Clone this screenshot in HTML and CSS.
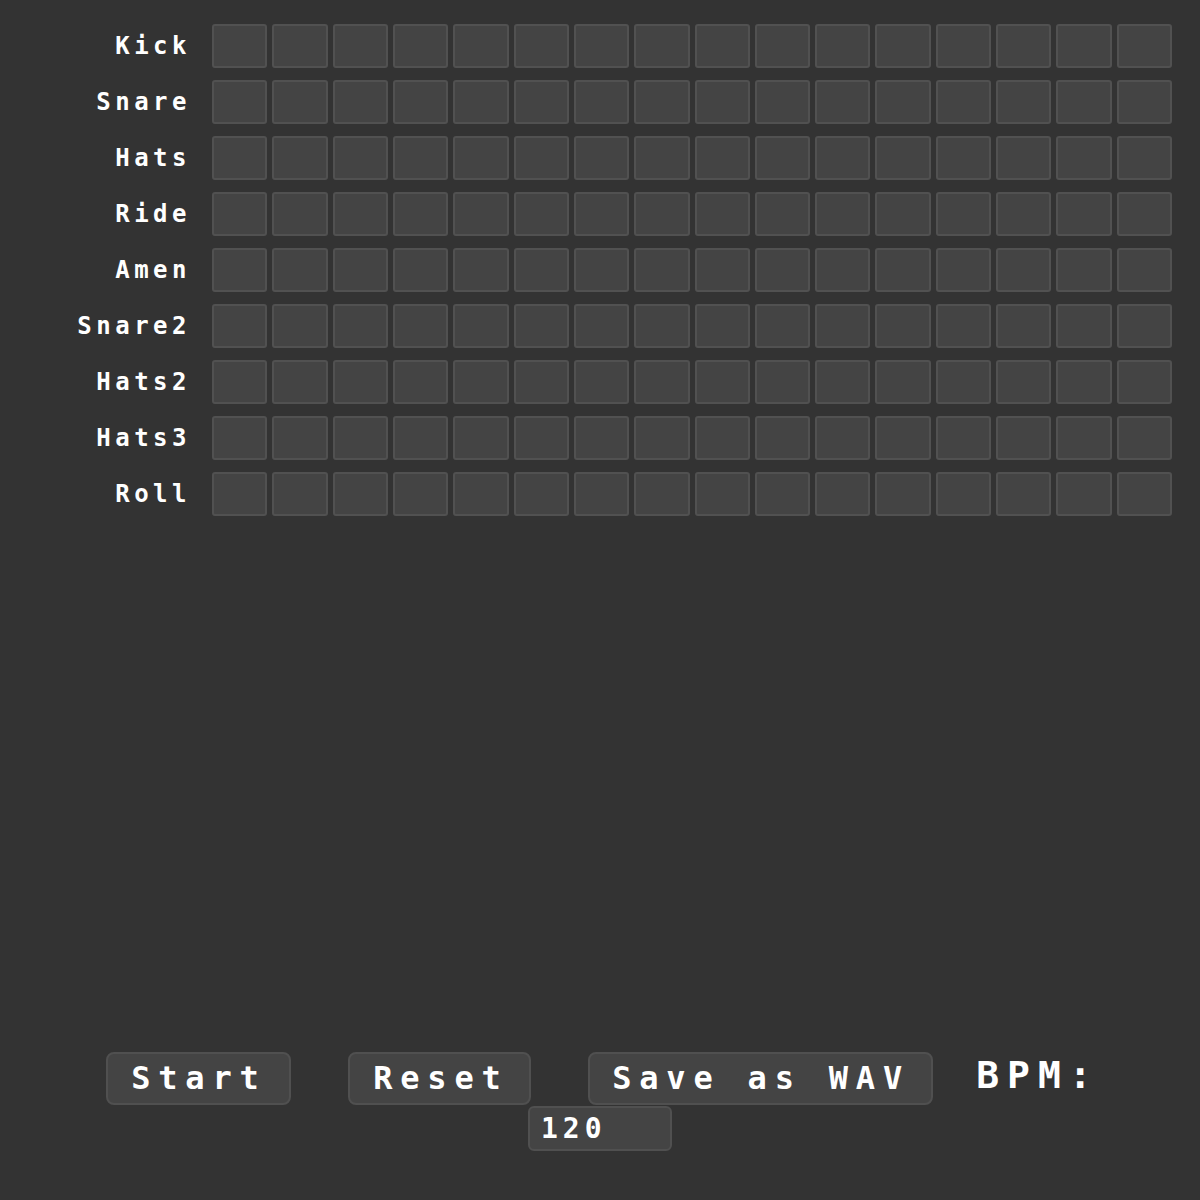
FILE: index.html
```html
<!DOCTYPE html>
<html>
<head>
<meta charset="utf-8">
<title>Drum Sequencer</title>
<link rel="stylesheet" href="styles.css">
</head>
<body>
<div class="tracks">
  <div class="track"><div class="name">Kick</div><div class="steps"><div class="step"></div><div class="step"></div><div class="step"></div><div class="step"></div><div class="step"></div><div class="step"></div><div class="step"></div><div class="step"></div><div class="step"></div><div class="step"></div><div class="step"></div><div class="step"></div><div class="step"></div><div class="step"></div><div class="step"></div><div class="step"></div></div></div>
  <div class="track"><div class="name">Snare</div><div class="steps"><div class="step"></div><div class="step"></div><div class="step"></div><div class="step"></div><div class="step"></div><div class="step"></div><div class="step"></div><div class="step"></div><div class="step"></div><div class="step"></div><div class="step"></div><div class="step"></div><div class="step"></div><div class="step"></div><div class="step"></div><div class="step"></div></div></div>
  <div class="track"><div class="name">Hats</div><div class="steps"><div class="step"></div><div class="step"></div><div class="step"></div><div class="step"></div><div class="step"></div><div class="step"></div><div class="step"></div><div class="step"></div><div class="step"></div><div class="step"></div><div class="step"></div><div class="step"></div><div class="step"></div><div class="step"></div><div class="step"></div><div class="step"></div></div></div>
  <div class="track"><div class="name">Ride</div><div class="steps"><div class="step"></div><div class="step"></div><div class="step"></div><div class="step"></div><div class="step"></div><div class="step"></div><div class="step"></div><div class="step"></div><div class="step"></div><div class="step"></div><div class="step"></div><div class="step"></div><div class="step"></div><div class="step"></div><div class="step"></div><div class="step"></div></div></div>
  <div class="track"><div class="name">Amen</div><div class="steps"><div class="step"></div><div class="step"></div><div class="step"></div><div class="step"></div><div class="step"></div><div class="step"></div><div class="step"></div><div class="step"></div><div class="step"></div><div class="step"></div><div class="step"></div><div class="step"></div><div class="step"></div><div class="step"></div><div class="step"></div><div class="step"></div></div></div>
  <div class="track"><div class="name">Snare2</div><div class="steps"><div class="step"></div><div class="step"></div><div class="step"></div><div class="step"></div><div class="step"></div><div class="step"></div><div class="step"></div><div class="step"></div><div class="step"></div><div class="step"></div><div class="step"></div><div class="step"></div><div class="step"></div><div class="step"></div><div class="step"></div><div class="step"></div></div></div>
  <div class="track"><div class="name">Hats2</div><div class="steps"><div class="step"></div><div class="step"></div><div class="step"></div><div class="step"></div><div class="step"></div><div class="step"></div><div class="step"></div><div class="step"></div><div class="step"></div><div class="step"></div><div class="step"></div><div class="step"></div><div class="step"></div><div class="step"></div><div class="step"></div><div class="step"></div></div></div>
  <div class="track"><div class="name">Hats3</div><div class="steps"><div class="step"></div><div class="step"></div><div class="step"></div><div class="step"></div><div class="step"></div><div class="step"></div><div class="step"></div><div class="step"></div><div class="step"></div><div class="step"></div><div class="step"></div><div class="step"></div><div class="step"></div><div class="step"></div><div class="step"></div><div class="step"></div></div></div>
  <div class="track"><div class="name">Roll</div><div class="steps"><div class="step"></div><div class="step"></div><div class="step"></div><div class="step"></div><div class="step"></div><div class="step"></div><div class="step"></div><div class="step"></div><div class="step"></div><div class="step"></div><div class="step"></div><div class="step"></div><div class="step"></div><div class="step"></div><div class="step"></div><div class="step"></div></div></div>
</div>
<div class="controls">
  <button class="btn btn-start">Start</button>
  <button class="btn btn-reset">Reset</button>
  <button class="btn btn-save">Save as WAV</button>
  <label class="bpm-label" for="bpm">BPM:</label>
  <input class="bpm-input" id="bpm" type="text" value="120">
</div>
</body>
</html>
```

FILE: styles.css
```css
html, body {
  margin: 0;
  padding: 0;
  background: #333333;
  color: #ffffff;
  font-family: "DejaVu Sans Mono", "Liberation Mono", monospace;
  font-weight: bold;
}

.tracks {
  display: flex;
  flex-direction: column;
  gap: 12px;
  padding-top: 24px;
}

.track {
  display: flex;
  align-items: center;
  height: 44px;
}

.name {
  width: 191px;
  text-align: right;
  font-size: 24px;
  letter-spacing: 4.5px;
  line-height: 44px;
  margin-right: 21px;
}

.steps {
  display: grid;
  grid-template-columns: repeat(16, 1fr);
  gap: 5px;
  width: 960px;
  height: 44px;
}

.step {
  box-sizing: border-box;
  height: 44px;
  background: #444444;
  border: 2px solid #515151;
  border-radius: 3px;
}

.controls {
  display: flex;
  flex-wrap: wrap;
  justify-content: center;
  align-items: flex-start;
  column-gap: 57px;
  row-gap: 1px;
  width: 1000px;
  margin: 536px auto 0;
}

.btn {
  box-sizing: border-box;
  height: 53px;
  padding: 0 18px 0 23px;
  background: #444444;
  color: #ffffff;
  border: 2px solid #505050;
  border-radius: 8px;
  font-family: "DejaVu Sans Mono", "Liberation Mono", monospace;
  font-weight: bold;
  font-size: 32px;
  letter-spacing: 7.8px;
  line-height: 49px;
  text-align: left;
}

.btn-start { width: 185px; }
.btn-reset { width: 183px; }
.btn-save { width: 345px; padding-left: 22px; }

.bpm-label {
  font-size: 38px;
  letter-spacing: 8px;
  line-height: 44px;
  margin-left: -14px;
  margin-right: -6px;
  margin-top: 1px;
}

.bpm-input {
  box-sizing: border-box;
  width: 144px;
  height: 45px;
  padding: 0 0 0 11px;
  background: #444444;
  color: #ffffff;
  border: 2px solid #505050;
  border-radius: 6px;
  font-family: "DejaVu Sans Mono", "Liberation Mono", monospace;
  font-weight: bold;
  font-size: 28px;
  letter-spacing: 5px;
  outline: none;
}
```
